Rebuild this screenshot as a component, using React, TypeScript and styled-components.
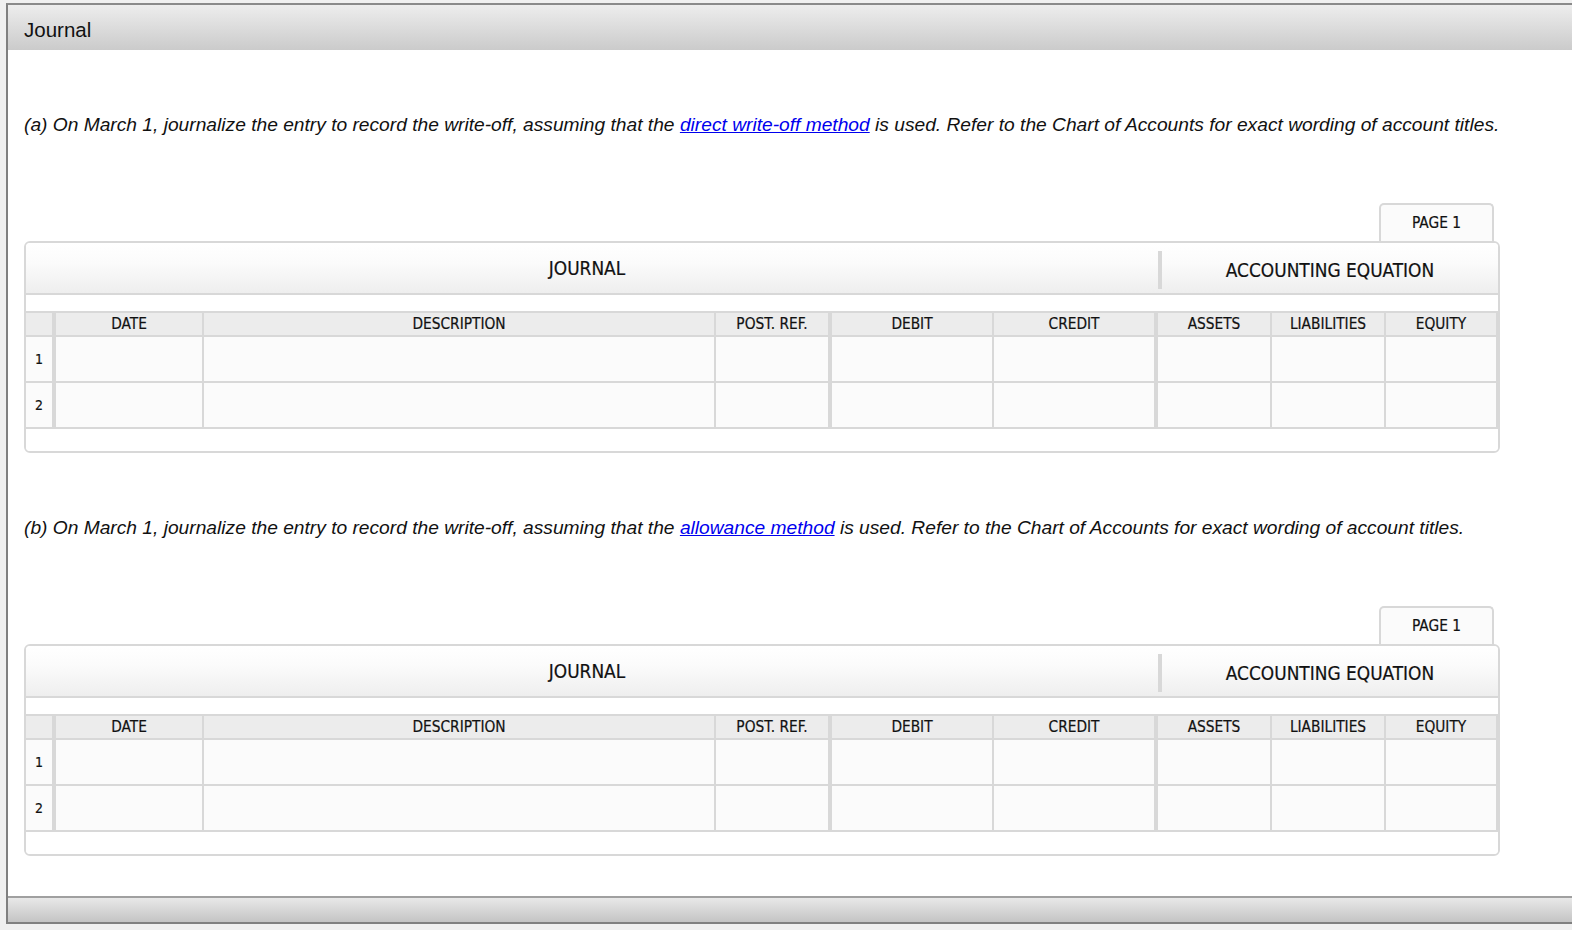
import React from "react";
import styled, { createGlobalStyle } from "styled-components";

const Global = createGlobalStyle`
  html, body { margin: 0; padding: 0; background: #f0f0f0; }
  body { font-family: "Liberation Sans", Arial, sans-serif; overflow: hidden; }
  * { box-sizing: border-box; }
`;

const Window = styled.div`
  margin: 3px 0 0 6px;
  width: 1566px;
  height: 921px;
  display: flex;
  flex-direction: column;
  border-top: 2px solid #8a8a8a;
  border-left: 2px solid #808080;
  border-bottom: 2px solid #808080;
  background: #ffffff;
`;

const TitleBar = styled.div`
  height: 45px;
  flex: none;
  display: flex;
  align-items: center;
  padding: 4px 0 0 16px;
  background: linear-gradient(#ededed, #cbcbcb);
  font-family: "Liberation Sans", Arial, sans-serif;
  font-size: 20.5px;
  color: #111;
`;

const Content = styled.div`
  flex: 1;
  min-height: 0;
  overflow: hidden;
  padding: 64px 0 0 16px;
  background: #fff;
`;

const FooterBar = styled.div`
  height: 26px;
  flex: none;
  border-top: 2px solid #a0a0a0;
  background: linear-gradient(#e8e8e8, #c4c4c4);
`;

const Section = styled.section`
  margin-bottom: 64px;
`;

const Prompt = styled.p`
  margin: 0 0 67px 0;
  font-family: "Liberation Sans", Arial, sans-serif;
  font-style: italic;
  font-size: 19.2px;
  line-height: 22px;
  color: #111;
  white-space: nowrap;
`;

const Link = styled.a`
  color: #0000ee;
  text-decoration: underline;
`;

const TabRow = styled.div`
  width: 1476px;
  display: flex;
  justify-content: flex-end;
  padding-right: 6px;
`;

const Tab = styled.div`
  width: 115px;
  height: 38px;
  display: flex;
  align-items: center;
  justify-content: center;
  background: #fbfbfb;
  border: 2px solid #d8d8d8;
  border-bottom: none;
  border-radius: 5px 5px 0 0;
  font-family: "DejaVu Sans Condensed", "DejaVu Sans", sans-serif;
  font-size: 15.3px;
  color: #111;
  -webkit-text-stroke: 0.2px #111;
`;

const TableBox = styled.div`
  width: 1476px;
  border: 2px solid #d8d8d8;
  border-radius: 6px;
  overflow: hidden;
  background: #fff;
`;

const Band = styled.div`
  height: 52px;
  display: flex;
  align-items: center;
  border-bottom: 2px solid #d8d8d8;
  background: linear-gradient(#ffffff 0%, #fbfbfb 40%, #eeeeee 100%);
  font-family: "DejaVu Sans Condensed", "DejaVu Sans", sans-serif;
  font-size: 18.9px;
  color: #111;
  -webkit-text-stroke: 0.2px #111;
`;

const BandTitle = styled.div<{ $w: number; $shift: number }>`
  width: ${(p) => p.$w}px;
  text-align: center;
  padding-right: ${(p) => p.$shift}px;
  padding-top: ${(p) => (p.$w > 1000 ? 0 : 3)}px;
`;

const BandDivider = styled.div`
  width: 4px;
  height: 38px;
  margin-top: 4px;
  background: #d8d8d8;
`;

const Spacer = styled.div`
  height: 16px;
`;

const Grid = styled.div`
  display: grid;
  grid-template-columns: 26px 150px 512px 114px 164px 162px 116px 114px 114px;
  border-top: 2px solid #d8d8d8;
`;

const Cell = styled.div<{ $left: number; $right?: boolean; $head?: boolean }>`
  height: ${(p) => (p.$head ? 24 : 46)}px;
  display: flex;
  align-items: center;
  justify-content: center;
  border-left: ${(p) => p.$left}px solid #d8d8d8;
  border-right: ${(p) => (p.$right ? 2 : 0)}px solid #d8d8d8;
  border-bottom: 2px solid #d8d8d8;
  background: ${(p) => (p.$head ? "#ececec" : "#fbfbfb")};
  font-family: "DejaVu Sans Condensed", "DejaVu Sans", sans-serif;
  font-size: ${(p) => (p.$head ? 15.3 : 14)}px;
  color: #111;
  -webkit-text-stroke: 0.2px #111;
`;

const TableFoot = styled.div`
  height: 22px;
  background: #fff;
`;

const columns = [
  { label: "", left: 0 },
  { label: "DATE", left: 4 },
  { label: "DESCRIPTION", left: 2 },
  { label: "POST. REF.", left: 2 },
  { label: "DEBIT", left: 4 },
  { label: "CREDIT", left: 2 },
  { label: "ASSETS", left: 4 },
  { label: "LIABILITIES", left: 2 },
  { label: "EQUITY", left: 2 },
];

function JournalTable() {
  return (
    <>
      <TabRow>
        <Tab>PAGE 1</Tab>
      </TabRow>
      <TableBox>
        <Band>
          <BandTitle $w={1132} $shift={10}>JOURNAL</BandTitle>
          <BandDivider />
          <BandTitle $w={336} $shift={0}>ACCOUNTING EQUATION</BandTitle>
        </Band>
        <Spacer />
        <Grid>
          {columns.map((c, i) => (
            <Cell key={"h" + i} $head $left={c.left} $right={i === columns.length - 1}>
              {c.label}
            </Cell>
          ))}
          {[1, 2].map((r) =>
            columns.map((c, i) => (
              <Cell key={r + "-" + i} $left={c.left} $right={i === columns.length - 1}>
                {i === 0 ? r : ""}
              </Cell>
            ))
          )}
        </Grid>
        <TableFoot />
      </TableBox>
    </>
  );
}

export default function App() {
  return (
    <>
      <Global />
      <Window>
        <TitleBar>Journal</TitleBar>
        <Content>
          <Section>
            <Prompt>
              (a) On March 1, journalize the entry to record the write-off, assuming that the{" "}
              <Link href="#">direct write-off method</Link> is used. Refer to the Chart of Accounts for
              exact wording of account titles.
            </Prompt>
            <JournalTable />
          </Section>
          <Section>
            <Prompt>
              (b) On March 1, journalize the entry to record the write-off, assuming that the{" "}
              <Link href="#">allowance method</Link> is used. Refer to the Chart of Accounts for exact
              wording of account titles.
            </Prompt>
            <JournalTable />
          </Section>
        </Content>
        <FooterBar />
      </Window>
    </>
  );
}
